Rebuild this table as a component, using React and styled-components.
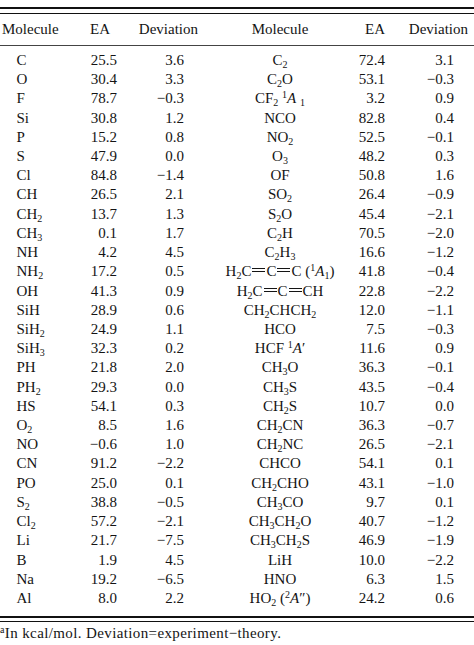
import React from "react";
import styled, { createGlobalStyle } from "styled-components";

const GlobalStyle = createGlobalStyle`
  html, body {
    margin: 0;
    padding: 0;
    background: #fff;
  }
  body {
    font-family: "Liberation Serif", "Times New Roman", serif;
    color: #141414;
  }
`;

const COLS = "75px 42px 85px 156px 34px 82px";

const TableWrap = styled.div`
  width: 474px;
  padding-top: 7px;
  font-size: 15px;
`;

const DoubleRule = styled.div`
  height: ${(p) => p.$gap}px;
  border-top: 2px solid #111;
  border-bottom: 1.5px solid #111;
`;

const HeadRow = styled.div`
  display: grid;
  grid-template-columns: ${COLS};
  align-items: center;
  height: 31px;
  border-bottom: 1px solid #444;
`;

const Body = styled.div`
  display: grid;
  grid-template-columns: ${COLS};
  padding: 4.9px 0 8.2px;
  line-height: 19.22px;
`;

const Cell = styled.div`
  text-align: ${(p) => p.$align || "right"};
  padding-left: ${(p) => p.$pl || 0}px;
  padding-right: ${(p) => p.$pr || 0}px;
  white-space: nowrap;
`;

const Sub = styled.sub`
  font-size: 10px;
  line-height: 0;
  vertical-align: -3px;
`;

const Sup = styled.sup`
  font-size: 10px;
  line-height: 0;
  vertical-align: 5px;
`;

const It = styled.i`
  font-style: italic;
`;

const Bond = styled.span`
  display: inline-block;
  width: 13px;
  height: 2px;
  margin: 0 1px;
  border-top: 1px solid #141414;
  border-bottom: 1px solid #141414;
  vertical-align: 4px;
`;

const Footnote = styled.div`
  margin-top: 2px;
  font-size: 15px;
  line-height: 19px;
  letter-spacing: 0.38px;
  white-space: nowrap;
`;

// digits in a formula are subscripts
const Formula = ({ f }) => (
  <>
    {f.split(/(\d+)/).map((part, i) =>
      /^\d+$/.test(part) ? <Sub key={i}>{part}</Sub> : part
    )}
  </>
);

const name = (m) => (typeof m === "string" ? <Formula f={m} /> : m);

const rows = [
  ["C", "25.5", "3.6", "C2", "72.4", "3.1"],
  ["O", "30.4", "3.3", "C2O", "53.1", "−0.3"],
  [
    "F", "78.7", "−0.3",
    <>CF<Sub>2</Sub> <Sup>1</Sup><It>A</It> <Sub>1</Sub></>,
    "3.2", "0.9",
  ],
  ["Si", "30.8", "1.2", "NCO", "82.8", "0.4"],
  ["P", "15.2", "0.8", "NO2", "52.5", "−0.1"],
  ["S", "47.9", "0.0", "O3", "48.2", "0.3"],
  ["Cl", "84.8", "−1.4", "OF", "50.8", "1.6"],
  ["CH", "26.5", "2.1", "SO2", "26.4", "−0.9"],
  ["CH2", "13.7", "1.3", "S2O", "45.4", "−2.1"],
  ["CH3", "0.1", "1.7", "C2H", "70.5", "−2.0"],
  ["NH", "4.2", "4.5", "C2H3", "16.6", "−1.2"],
  [
    "NH2", "17.2", "0.5",
    <>H<Sub>2</Sub>C<Bond />C<Bond />C (<Sup>1</Sup><It>A</It><Sub>1</Sub>)</>,
    "41.8", "−0.4",
  ],
  [
    "OH", "41.3", "0.9",
    <>H<Sub>2</Sub>C<Bond />C<Bond />CH</>,
    "22.8", "−2.2",
  ],
  ["SiH", "28.9", "0.6", "CH2CHCH2", "12.0", "−1.1"],
  ["SiH2", "24.9", "1.1", "HCO", "7.5", "−0.3"],
  [
    "SiH3", "32.3", "0.2",
    <>HCF <Sup>1</Sup><It>A</It>′</>,
    "11.6", "0.9",
  ],
  ["PH", "21.8", "2.0", "CH3O", "36.3", "−0.1"],
  ["PH2", "29.3", "0.0", "CH3S", "43.5", "−0.4"],
  ["HS", "54.1", "0.3", "CH2S", "10.7", "0.0"],
  ["O2", "8.5", "1.6", "CH2CN", "36.3", "−0.7"],
  ["NO", "−0.6", "1.0", "CH2NC", "26.5", "−2.1"],
  ["CN", "91.2", "−2.2", "CHCO", "54.1", "0.1"],
  ["PO", "25.0", "0.1", "CH2CHO", "43.1", "−1.0"],
  ["S2", "38.8", "−0.5", "CH3CO", "9.7", "0.1"],
  ["Cl2", "57.2", "−2.1", "CH3CH2O", "40.7", "−1.2"],
  ["Li", "21.7", "−7.5", "CH3CH2S", "46.9", "−1.9"],
  ["B", "1.9", "4.5", "LiH", "10.0", "−2.2"],
  ["Na", "19.2", "−6.5", "HNO", "6.3", "1.5"],
  [
    "Al", "8.0", "2.2",
    <>HO<Sub>2</Sub> (<Sup>2</Sup><It>A</It>″)</>,
    "24.2", "0.6",
  ],
];

export default function App() {
  return (
    <>
      <GlobalStyle />
      <TableWrap>
        <DoubleRule $gap={4} />
        <HeadRow>
          <Cell $align="left" $pl={2}>Molecule</Cell>
          <Cell $pr={7}>EA</Cell>
          <Cell $pr={4}>Deviation</Cell>
          <Cell $align="center">Molecule</Cell>
          <Cell $pr={7}>EA</Cell>
          <Cell $pr={6}>Deviation</Cell>
        </HeadRow>
        <Body>
          {rows.map((r, i) => (
            <React.Fragment key={i}>
              <Cell $align="left" $pl={16.5}>{name(r[0])}</Cell>
              <Cell>{r[1]}</Cell>
              <Cell $pr={18}>{r[2]}</Cell>
              <Cell $align="center">{name(r[3])}</Cell>
              <Cell $pr={7}>{r[4]}</Cell>
              <Cell $pr={20}>{r[5]}</Cell>
            </React.Fragment>
          ))}
        </Body>
        <DoubleRule $gap={3} />
        <Footnote>
          <Sup>a</Sup>In kcal/mol. Deviation=experiment−theory.
        </Footnote>
      </TableWrap>
    </>
  );
}
